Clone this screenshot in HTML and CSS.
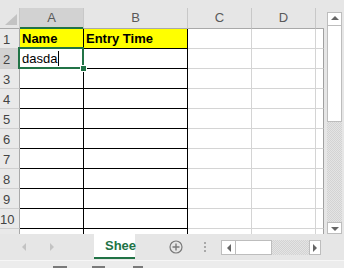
FILE: index.html
```html
<!DOCTYPE html>
<html lang="en">
<head>
  <meta charset="UTF-8" />
  <title>Book1 - Excel</title>
  <link rel="stylesheet" href="styles.css">
</head>
<body>
  <div class="window">
    <div class="main">
      <div class="grid">
        <!-- column headers -->
        <div class="ch corner">
          <svg width="12" height="11" viewBox="0 0 12 11"><polygon points="12,0 12,11 0,11" fill="#c3c3c3"/></svg>
        </div>
        <div class="ch sel">A</div>
        <div class="ch">B</div>
        <div class="ch">C</div>
        <div class="ch">D</div>
        <div class="ch edge"></div>

        <div class="rh">1</div>
        <div class="c t y">Name</div>
        <div class="c t y">Entry Time</div>
        <div class="c"></div>
        <div class="c"></div>
        <div class="c edge"></div>

        <div class="rh sel">2</div>
        <div class="c t active">dasda<span class="caret"></span></div>
        <div class="c t"></div>
        <div class="c"></div>
        <div class="c"></div>
        <div class="c edge"></div>

        <div class="rh">3</div>
        <div class="c t"></div>
        <div class="c t"></div>
        <div class="c"></div>
        <div class="c"></div>
        <div class="c edge"></div>

        <div class="rh">4</div>
        <div class="c t"></div>
        <div class="c t"></div>
        <div class="c"></div>
        <div class="c"></div>
        <div class="c edge"></div>

        <div class="rh">5</div>
        <div class="c t"></div>
        <div class="c t"></div>
        <div class="c"></div>
        <div class="c"></div>
        <div class="c edge"></div>

        <div class="rh">6</div>
        <div class="c t"></div>
        <div class="c t"></div>
        <div class="c"></div>
        <div class="c"></div>
        <div class="c edge"></div>

        <div class="rh">7</div>
        <div class="c t"></div>
        <div class="c t"></div>
        <div class="c"></div>
        <div class="c"></div>
        <div class="c edge"></div>

        <div class="rh">8</div>
        <div class="c t"></div>
        <div class="c t"></div>
        <div class="c"></div>
        <div class="c"></div>
        <div class="c edge"></div>

        <div class="rh">9</div>
        <div class="c t"></div>
        <div class="c t"></div>
        <div class="c"></div>
        <div class="c"></div>
        <div class="c edge"></div>

        <div class="rh">10</div>
        <div class="c t"></div>
        <div class="c t"></div>
        <div class="c"></div>
        <div class="c"></div>
        <div class="c edge"></div>

        <!-- row 11, cut off -->
        <div class="rh part"></div>
        <div class="c part t"></div>
        <div class="c part t"></div>
        <div class="c part"></div>
        <div class="c part"></div>
        <div class="c part edge"></div>
      </div>

      <div class="vscroll">
        <div class="sb-btn"><span class="tri-up"></span></div>
        <div class="sb-thumb"></div>
        <div class="sb-track"></div>
        <div class="sb-btn down"><span class="tri-down"></span></div>
      </div>
    </div>

    <div class="tabbar">
      <div class="nav">
        <span class="nav-left"></span>
        <span class="nav-right"></span>
      </div>
      <div class="tab">Shee</div>
      <svg class="add" width="14" height="14" viewBox="0 0 14 14">
        <circle cx="7" cy="7" r="6" fill="none" stroke="#7a7a7a" stroke-width="1.2"/>
        <path d="M7 3.5v7M3.5 7h7" stroke="#7a7a7a" stroke-width="1.4"/>
      </svg>
      <div class="dots"><i></i><i></i><i></i></div>
      <div class="hscroll">
        <div class="hs-btn"><span class="tri-left"></span></div>
        <div class="hs-thumb"></div>
        <div class="hs-track"></div>
        <div class="hs-btn right"><span class="tri-right"></span></div>
      </div>
    </div>

    <div class="statusbar">
      <span class="blk b1"></span>
      <span class="blk b2"></span>
      <span class="blk b3"></span>
    </div>
  </div>
</body>
</html>
```

FILE: styles.css
```css
body {
  margin: 0;
  font-family: "Liberation Sans", Arial, sans-serif;
  background-color: #e6e6e6;
}

.window {
  width: 344px;
  height: 268px;
  overflow: hidden;
  display: flex;
  flex-direction: column;
}

.main {
  display: flex;
  height: 234px;
}

/* sheet grid */
.grid {
  width: 324px;
  padding-top: 8px;
  box-sizing: border-box;
  display: grid;
  grid-template-columns: 20px 64px 104px 64px 64px 8px;
  grid-template-rows: 21px repeat(10, 20px) 5px;
  background-color: #e6e6e6;
  font-size: 13px;
}

.grid > div {
  box-sizing: border-box;
  overflow: hidden;
  white-space: nowrap;
}

.ch {
  background-color: #e6e6e6;
  border-right: 1px solid #c8c8c8;
  border-bottom: 1px solid #a9a9a9;
  color: #595959;
  text-align: center;
  line-height: 20px;
}

.ch.sel {
  background-color: #d2d2d2;
  border-bottom-color: #217346;
  box-shadow: inset 0 -1px 0 #217346;
}

.ch.edge {
  border-right: none;
}

.corner {
  display: flex;
  align-items: flex-end;
  justify-content: flex-end;
  padding: 0 2px 3px 0;
}

.rh {
  background-color: #e9e9e9;
  border-right: 1px solid #a9a9a9;
  border-bottom: 1px solid #cfcfcf;
  color: #444444;
  text-align: center;
  padding-right: 6px;
  line-height: 22px;
}

.rh.sel {
  background-color: #d2d2d2;
  border-right-color: #217346;
  box-shadow: inset -1px 0 0 #217346;
}

.rh.part {
  border-bottom: none;
}

.c {
  background-color: #ffffff;
  border-right: 1px solid #d4d4d4;
  border-bottom: 1px solid #d4d4d4;
  padding-left: 2px;
  line-height: 20px;
  color: #000000;
}

.c.t {
  border-right-color: #000000;
  border-bottom-color: #000000;
}

.c.y {
  background-color: #ffff00;
  font-weight: bold;
}

.c.edge {
  border-right-color: #a0a0a0;
  padding-left: 0;
}

.c.part {
  border-bottom: none;
}

.grid > .active {
  position: relative;
  overflow: visible;
}

.active::before {
  content: "";
  position: absolute;
  top: -2px;
  left: -2px;
  right: -1px;
  bottom: -1px;
  border: 2px solid #217346;
}

.active::after {
  content: "";
  position: absolute;
  right: -4px;
  bottom: -4px;
  width: 5px;
  height: 5px;
  background-color: #217346;
  border: 1px solid #ffffff;
}

.caret {
  display: inline-block;
  width: 1px;
  height: 15px;
  margin-left: 1px;
  background-color: #000000;
  vertical-align: -3px;
}

/* vertical scrollbar */
.vscroll {
  width: 20px;
  padding: 12px 2px 0 3px;
  box-sizing: border-box;
  display: flex;
  flex-direction: column;
}

.sb-btn {
  height: 14px;
  background-color: #ffffff;
  border: 1px solid #bdbdbd;
  box-sizing: border-box;
  display: flex;
  justify-content: center;
  padding-top: 3px;
}

.sb-btn.down {
  height: 12px;
  padding-top: 4px;
}

.sb-thumb {
  height: 97px;
  margin-top: -1px;
  background-color: #ffffff;
  border: 1px solid #bdbdbd;
  box-sizing: border-box;
}

.sb-track,
.hs-track {
  flex: 1;
  background: repeating-conic-gradient(#d3d3d3 0 25%, #e4e4e4 0 50%) 0 0 / 2px 2px;
}

.tri-up {
  border-left: 4px solid transparent;
  border-right: 4px solid transparent;
  border-bottom: 4px solid #666666;
  height: 0;
}

.tri-down {
  border-left: 4px solid transparent;
  border-right: 4px solid transparent;
  border-top: 4px solid #666666;
  height: 0;
}

/* sheet tabs bar */
.tabbar {
  height: 26px;
  display: flex;
  align-items: center;
}

.nav {
  width: 94px;
  display: flex;
  align-items: center;
  padding-left: 22px;
  box-sizing: border-box;
}

.nav-left {
  border-top: 4px solid transparent;
  border-bottom: 4px solid transparent;
  border-right: 4px solid #c3c3c3;
}

.nav-right {
  margin-left: 24px;
  border-top: 4px solid transparent;
  border-bottom: 4px solid transparent;
  border-left: 4px solid #c3c3c3;
}

.tab {
  align-self: flex-start;
  width: 41px;
  height: 25px;
  box-sizing: border-box;
  padding: 1px 0 0 11px;
  background-color: #ffffff;
  border-bottom: 2px solid #217346;
  color: #217346;
  font-weight: bold;
  font-size: 13px;
  line-height: 22px;
  white-space: nowrap;
}

.add {
  margin-left: 34px;
}

.dots {
  margin-left: 21px;
  display: flex;
  flex-direction: column;
  gap: 2px;
}

.dots i {
  width: 2px;
  height: 2px;
  background-color: #a8a8a8;
}

.hscroll {
  margin-left: 15px;
  width: 100px;
  height: 15px;
  display: flex;
  margin-top: 1px;
}

.hs-btn {
  width: 15px;
  background-color: #ffffff;
  border: 1px solid #bdbdbd;
  box-sizing: border-box;
  display: flex;
  align-items: center;
  justify-content: center;
}

.hs-btn.right {
  width: 12px;
}

.hs-thumb {
  width: 37px;
  margin-left: -1px;
  background-color: #ffffff;
  border: 1px solid #bdbdbd;
  box-sizing: border-box;
}

.tri-left {
  border-top: 4px solid transparent;
  border-bottom: 4px solid transparent;
  border-right: 4px solid #666666;
}

.tri-right {
  border-top: 4px solid transparent;
  border-bottom: 4px solid transparent;
  border-left: 4px solid #666666;
}

/* status bar, cut off at the bottom */
.statusbar {
  flex: 1;
  display: flex;
  align-items: flex-end;
  background-color: #ececec;
  border-top: 1px solid #f6f6f6;
}

.blk {
  height: 2px;
  background-color: #7a7a7a;
}

.b1 {
  margin-left: 53px;
  width: 14px;
}

.b2 {
  margin-left: 25px;
  width: 13px;
}

.b3 {
  margin-left: 28px;
  width: 10px;
}
```
